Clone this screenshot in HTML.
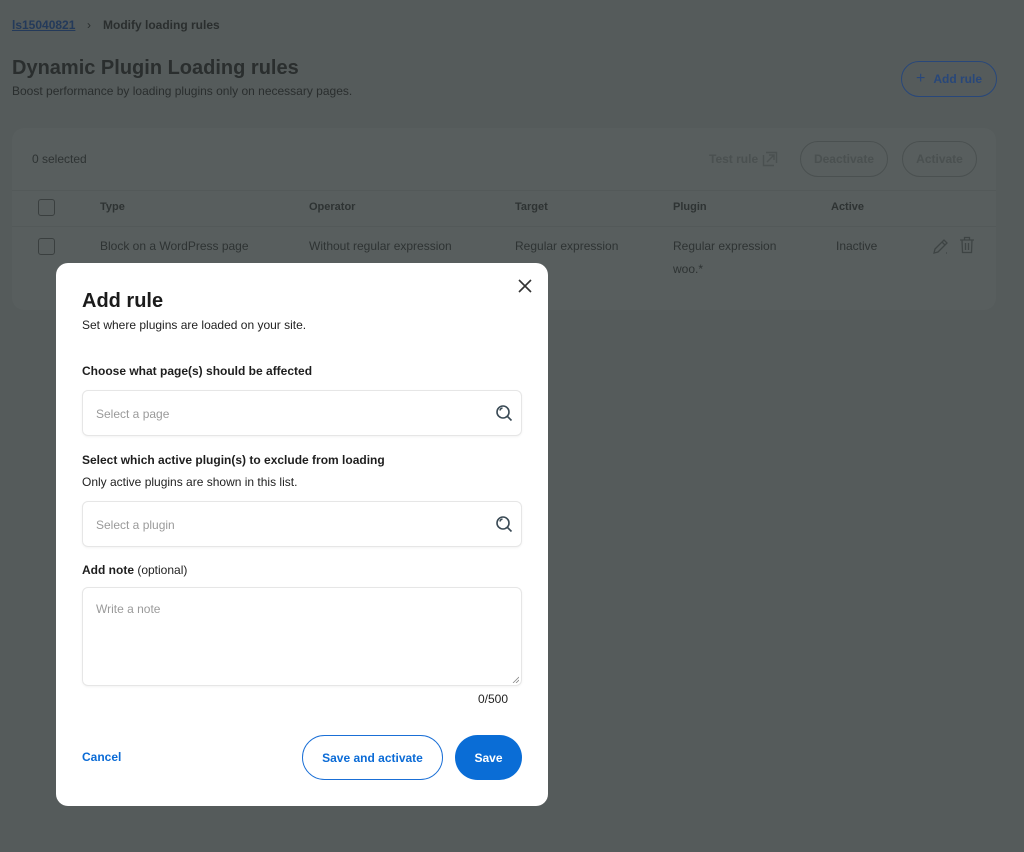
<!DOCTYPE html>
<html><head><meta charset="utf-8"><style>
*{box-sizing:border-box;margin:0;padding:0}
body{width:1024px;height:852px;background:#555b5b;font-family:"Liberation Sans",sans-serif;position:relative;overflow:hidden;color:#262a2a}
.a{position:absolute;white-space:nowrap}
.dk{color:#2a2e2e}
.card{position:absolute;left:12px;top:128px;width:984px;height:182px;background:#585e5e;border-radius:12px}
.pill{position:absolute;border:1.5px solid #4a5050;border-radius:20px;color:#4a5050;font-size:12px;font-weight:bold;display:flex;align-items:center;justify-content:center}
.cb{position:absolute;width:17px;height:17px;border:1.5px solid #3a3f3f;border-radius:3px}
.th{font-size:11px;font-weight:bold;color:#2e3333}
.td{font-size:12px;color:#2e3333}
.modal{position:absolute;left:56px;top:263px;width:492px;height:543px;background:#fff;border-radius:12px}
.lbl{font-size:12px;font-weight:bold;color:#1e1e1e}
.inp{position:absolute;left:26px;width:440px;border:1px solid #e6e6e6;border-radius:6px;box-shadow:0 1px 2px rgba(0,0,0,.05)}
.ph{position:absolute;left:13px;font-size:12px;color:#9a9a9a}
</style></head><body>
<div class="a" style="left:12px;top:18px;font-size:12px;color:#243a5a;text-decoration:underline;font-weight:bold">ls15040821</div>
<div class="a dk" style="left:87px;top:18px;font-size:12px">›</div>
<div class="a dk" style="left:103px;top:18px;font-size:12px;font-weight:bold">Modify loading rules</div>
<div class="a dk" style="left:12px;top:57px;font-size:20px;font-weight:bold">Dynamic Plugin Loading rules</div>
<div class="a dk" style="left:12px;top:84px;font-size:12px">Boost performance by loading plugins only on necessary pages.</div>
<div class="a" style="left:901px;top:61px;width:96px;height:36px;border:1.5px solid #28477a;border-radius:20px;color:#28477a;font-size:12px;font-weight:bold;display:flex;align-items:center;justify-content:center"><span style="font-size:16px;font-weight:normal;margin-right:8px">+</span>Add rule</div>
<div class="card"></div>
<div style="position:absolute;left:12px;top:190px;width:984px;height:1px;background:#535959"></div>
<div style="position:absolute;left:12px;top:226px;width:984px;height:1px;background:#535959"></div>
<div class="a td" style="left:32px;top:152px">0 selected</div>
<div class="a" style="left:709px;top:152px;font-size:12px;font-weight:bold;color:#4a5050">Test rule</div>
<svg class="a" style="left:762px;top:151px" width="16" height="16" viewBox="0 0 16 16" fill="none" stroke="#4a5050" stroke-width="1.4"><path d="M4 1.5H14.5V12M1.5 4V14.5H12M5 11L12 4M7 4h5v5"/></svg>
<div class="pill" style="left:800px;top:141px;width:88px;height:36px">Deactivate</div>
<div class="pill" style="left:902px;top:141px;width:75px;height:36px">Activate</div>
<div class="cb" style="left:38px;top:199px"></div>
<div class="cb" style="left:38px;top:238px"></div>
<div class="a th" style="left:100px;top:201px">Type</div>
<div class="a th" style="left:309px;top:201px">Operator</div>
<div class="a th" style="left:515px;top:201px">Target</div>
<div class="a th" style="left:673px;top:201px">Plugin</div>
<div class="a th" style="left:831px;top:201px">Active</div>
<div class="a td" style="left:100px;top:239px">Block on a WordPress page</div>
<div class="a td" style="left:309px;top:239px">Without regular expression</div>
<div class="a td" style="left:515px;top:239px">Regular expression</div>
<div class="a td" style="left:673px;top:239px">Regular expression</div>
<div class="a td" style="left:673px;top:262px">woo.*</div>
<div class="a td" style="left:836px;top:239px">Inactive</div>
<svg class="a" style="left:932px;top:237px" width="18" height="18" viewBox="0 0 18 18" fill="none" stroke="#3e4444" stroke-width="1.3"><path d="M2 16L3 12L12 3L15 6L6 15Z M10 5L13 8 M14 16h1"/></svg>
<svg class="a" style="left:959px;top:236px" width="16" height="18" viewBox="0 0 16 18" fill="none" stroke="#3e4444" stroke-width="1.3"><path d="M1 4H15 M5.5 4V1.5H10.5V4 M3 4L3.5 16.5H12.5L13 4 M6.5 7v7 M9.5 7v7"/></svg>

<div class="modal">
<svg class="a" style="left:462px;top:16px" width="14" height="14" viewBox="0 0 14 14" stroke="#333" stroke-width="1.6"><path d="M1 1L13 13M13 1L1 13"/></svg>
<div class="a" style="left:26px;top:27px;font-size:20px;font-weight:bold;color:#1b1b1b">Add rule</div>
<div class="a" style="left:26px;top:55px;font-size:12px;color:#222">Set where plugins are loaded on your site.</div>
<div class="a lbl" style="left:26px;top:101px">Choose what page(s) should be affected</div>
<div class="inp" style="top:127px;height:46px"><div class="ph" style="top:16px">Select a page</div>
<svg style="position:absolute;right:8px;top:13px" width="18" height="18" viewBox="0 0 18 18" fill="none" stroke="#3a4a55" stroke-width="1.6"><circle cx="8" cy="8" r="6"/><path d="M12.5 12.5L16.5 16.5M5 6.5a3 3 0 0 1 2.5-2.5"/></svg></div>
<div class="a lbl" style="left:26px;top:190px">Select which active plugin(s) to exclude from loading</div>
<div class="a" style="left:26px;top:212px;font-size:12px;color:#222">Only active plugins are shown in this list.</div>
<div class="inp" style="top:238px;height:46px"><div class="ph" style="top:16px">Select a plugin</div>
<svg style="position:absolute;right:8px;top:13px" width="18" height="18" viewBox="0 0 18 18" fill="none" stroke="#3a4a55" stroke-width="1.6"><circle cx="8" cy="8" r="6"/><path d="M12.5 12.5L16.5 16.5M5 6.5a3 3 0 0 1 2.5-2.5"/></svg></div>
<div class="a" style="left:26px;top:300px;font-size:12px;color:#222"><b style="color:#1e1e1e">Add note</b> (optional)</div>
<div class="inp" style="top:324px;height:99px"><div class="ph" style="top:14px">Write a note</div>
<svg style="position:absolute;right:2px;bottom:2px" width="7" height="7" viewBox="0 0 7 7" stroke="#888" stroke-width="0.8"><path d="M1 7L7 1M4 7L7 4"/></svg></div>
<div class="a" style="left:422px;top:429px;font-size:12px;color:#222">0/500</div>
<div class="a" style="left:26px;top:487px;font-size:12px;font-weight:bold;color:#0b6bd6">Cancel</div>
<div class="a" style="left:246px;top:472px;width:141px;height:45px;border:1.5px solid #1a6fd6;border-radius:23px;color:#0b6bd6;font-size:12px;font-weight:bold;display:flex;align-items:center;justify-content:center">Save and activate</div>
<div class="a" style="left:399px;top:472px;width:67px;height:45px;background:#0a6dd6;border-radius:23px;color:#fff;font-size:12px;font-weight:bold;display:flex;align-items:center;justify-content:center">Save</div>
</div>
</body></html>
